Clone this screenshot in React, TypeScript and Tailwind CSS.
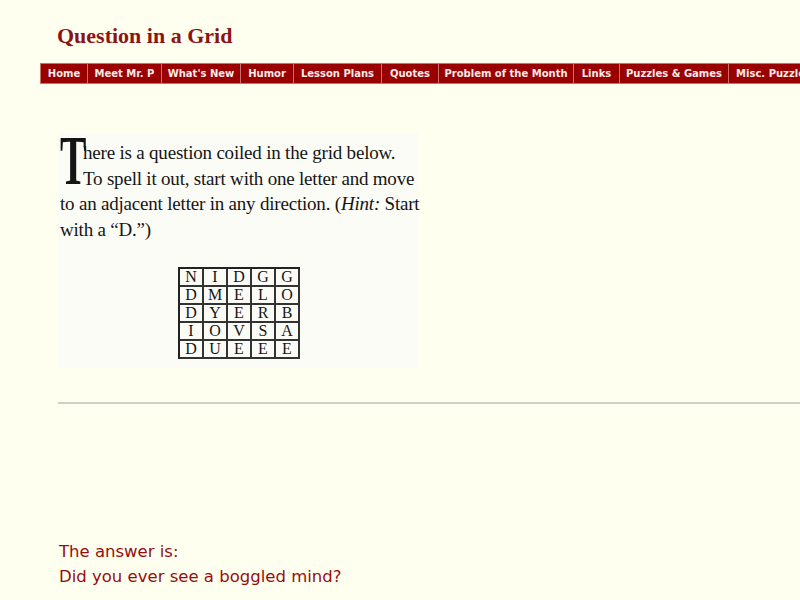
const navItems: { label: string; w: string }[] = [
  { label: 'Home', w: 'w-[48px]' },
  { label: 'Meet Mr. P', w: 'w-[74px]' },
  { label: "What's New", w: 'w-[79px]' },
  { label: 'Humor', w: 'w-[53px]' },
  { label: 'Lesson Plans', w: 'w-[88px]' },
  { label: 'Quotes', w: 'w-[57px]' },
  { label: 'Problem of the Month', w: 'w-[135px]' },
  { label: 'Links', w: 'w-[46px]' },
  { label: 'Puzzles & Games', w: 'w-[109px]' },
  { label: 'Misc. Puzzles', w: 'w-[90px]' },
]

const grid = [
  ['N', 'I', 'D', 'G', 'G'],
  ['D', 'M', 'E', 'L', 'O'],
  ['D', 'Y', 'E', 'R', 'B'],
  ['I', 'O', 'V', 'S', 'A'],
  ['D', 'U', 'E', 'E', 'E'],
]

function PuzzleScan() {
  return (
    <div className="w-[360px] h-[235px] bg-[#fcfcf7] pt-[7px] pl-[2px] font-['Liberation_Serif',serif] text-[#151515]">
      <div className="text-[19px] leading-[25.5px] tracking-[-0.2px] whitespace-nowrap">
        <span className="float-left w-[23px] h-[42px] overflow-visible">
          <span className="block origin-top-left scale-x-[0.6] scale-y-[1.05] text-[66px] leading-[40px] font-bold">T</span>
        </span>
        here is a question coiled in the grid below.
        <br />
        To spell it out, start with one letter and move
        <br />
        to an adjacent letter in any direction. (<i>Hint:</i> Start
        <br />
        with a “D.”)
      </div>
      <div className="flex justify-start pl-[118px] pt-[25px]">
        <div className="border-l-2 border-t-2 border-[#222] grid grid-cols-5">
          {grid.flat().map((ch, i) => (
            <div
              key={i}
              className="w-[24px] h-[18px] flex items-center justify-center border-r-2 border-b-2 border-[#333] text-[16px] leading-none"
            >
              {ch}
            </div>
          ))}
        </div>
      </div>
    </div>
  )
}

export default function App() {
  return (
    <div className="min-h-[600px] w-[800px] overflow-hidden bg-[#fffff0]">
      <div className="pl-[40px] pt-[22px]">
        <h1 className="ml-[17px] font-['Liberation_Serif',serif] font-bold text-[22px] leading-[28px] text-[#8b1414]">
          Question in a Grid
        </h1>
        <nav className="mt-[13px] flex w-[900px] h-[21px]">
          {navItems.map((item) => (
            <div
              key={item.label}
              className={`${item.w} shrink-0 h-full flex items-center justify-center bg-[#990000] border border-[#c9706e] border-l-0 first:border-l text-[#fbeaea] font-['DejaVu_Sans',sans-serif] font-bold text-[10px] whitespace-nowrap`}
            >
              {item.label}
            </div>
          ))}
        </nav>
        <div className="ml-[18px] mt-[49px]">
          <PuzzleScan />
        </div>
        <hr className="ml-[18px] mt-[34px] border-0 h-[2px] bg-[#cfcfc4]" />
        <div className="ml-[19px] mt-[135px] font-['DejaVu_Sans',sans-serif] text-[16.5px] leading-[25px] text-[#960d0d]">
          <div>The answer is:</div>
          <div>Did you ever see a boggled mind?</div>
        </div>
      </div>
    </div>
  )
}
